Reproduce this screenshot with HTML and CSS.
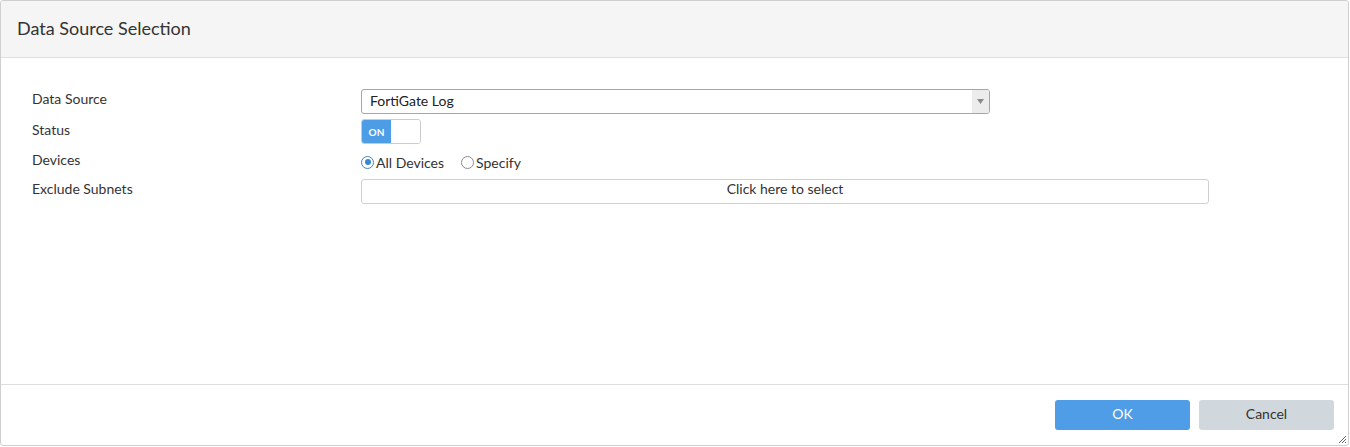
FILE: index.html
```html
<!DOCTYPE html>
<html>
<head>
<meta charset="utf-8">
<link rel="stylesheet" href="styles.css">
</head>
<body>
<div class="dialog">
  <div class="dialog-header">Data Source Selection</div>
  <div class="dialog-body">
    <div class="form">
      <div class="row">
        <div class="label">Data Source</div>
        <div class="control">
          <div class="select">
            <span class="select-text">FortiGate Log</span>
            <span class="select-arrow"><svg width="7" height="5" viewBox="0 0 7 5"><path d="M0 0H7L3.5 5Z" fill="#8a8a8a"/></svg></span>
          </div>
        </div>
      </div>
      <div class="row">
        <div class="label">Status</div>
        <div class="control">
          <div class="toggle"><span class="toggle-on">ON</span><span class="toggle-off"></span></div>
        </div>
      </div>
      <div class="row">
        <div class="label">Devices</div>
        <div class="control radios">
          <label class="radio"><span class="radio-circle checked"></span>All Devices</label>
          <label class="radio"><span class="radio-circle"></span>Specify</label>
        </div>
      </div>
      <div class="row">
        <div class="label">Exclude Subnets</div>
        <div class="control">
          <div class="picker">Click here to select</div>
        </div>
      </div>
    </div>
  </div>
  <div class="dialog-footer">
    <button class="btn btn-primary">OK</button>
    <button class="btn btn-secondary">Cancel</button>
    <svg class="grip" width="9" height="9" viewBox="0 0 9 9"><path d="M8 1L1 8M8 4L4 8M8 7L7 8" stroke="#666" stroke-width="1"/></svg>
  </div>
</div>
</body>
</html>
```

FILE: styles.css
```css
* { box-sizing: border-box; }
html, body { margin: 0; padding: 0; background: #fff; }
body { font-family: Lato, "Open Sans", "Liberation Sans", sans-serif; color: #333; font-size: 14px; }

.dialog {
  width: 1349px;
  height: 446px;
  border: 1px solid #cfcfcf;
  border-radius: 3px;
  display: flex;
  flex-direction: column;
  background: #fff;
  position: relative;
}

.dialog-header {
  height: 57px;
  background: #f5f5f5;
  border-bottom: 1px solid #dedede;
  padding: 0 16px 2px 16px;
  display: flex;
  align-items: center;
  font-size: 18px;
  color: #333;
  border-radius: 3px 3px 0 0;
}

.dialog-body {
  flex: 1;
  padding: 31px 31px 0 31px;
}

.form { display: flex; flex-direction: column; }

.row {
  display: grid;
  grid-template-columns: 329px 1fr;
  height: 30px;
}

.label {
  line-height: 20px;
  font-size: 14px;
  color: #333;
}
.row:nth-child(2) .label, .row:nth-child(3) .label { line-height: 21px; }

.control { display: flex; align-items: flex-start; }

.select {
  width: 629px;
  height: 25px;
  border: 1px solid #a6a6a6;
  border-radius: 3px;
  display: flex;
  align-items: stretch;
  overflow: hidden;
}
.select-text {
  flex: 1;
  padding-left: 8px;
  line-height: 21px;
  font-size: 14px;
  color: #222;
}
.select-arrow {
  width: 17px;
  background: #ececec;
  display: flex;
  align-items: center;
  justify-content: center;
}

.toggle {
  width: 60px;
  height: 25px;
  border: 1px solid #cccccc;
  border-radius: 3px;
  display: flex;
  overflow: hidden;
}
.toggle-on {
  width: 29px;
  background: #4c9de6;
  color: #fff;
  font-size: 10px;
  font-weight: bold;
  display: flex;
  align-items: center;
  justify-content: center;
}
.toggle-off { flex: 1; background: #fff; }

.radio {
  display: flex;
  align-items: center;
  height: 26px;
  font-size: 14px;
  color: #333;
  margin-right: 17px;
}
.radio-circle {
  width: 13px;
  height: 13px;
  border: 1px solid #8d8d8d;
  border-radius: 50%;
  margin-right: 2px;
  position: relative;
  background: #fff;
}
.radio-circle.checked { border: 1.5px solid #3a86d2; }
.radio-circle.checked::after {
  content: "";
  position: absolute;
  left: 50%; top: 50%;
  width: 6px; height: 6px;
  margin: -3px 0 0 -3px;
  border-radius: 50%;
  background: #3a86d2;
}

.picker {
  width: 848px;
  height: 25px;
  border: 1px solid #d0d0d0;
  border-radius: 3px;
  text-align: center;
  line-height: 17px;
  font-size: 14px;
  color: #333;
}

.dialog-footer {
  height: 61px;
  border-top: 1px solid #dedede;
  display: flex;
  justify-content: flex-end;
  align-items: flex-start;
  padding: 15px 14px 0 0;
  gap: 9px;
  position: relative;
}

.btn {
  width: 135px;
  height: 30px;
  border: none;
  border-radius: 3px;
  padding: 0 0 3px 0;
  font-family: Lato, "Open Sans", "Liberation Sans", sans-serif;
  font-size: 14px;
  cursor: pointer;
}
.btn-primary { background: #4e9de6; color: #fff; }
.btn-secondary { background: #d0d8de; color: #333; }

.grip { position: absolute; right: 1px; bottom: 1px; }
```
